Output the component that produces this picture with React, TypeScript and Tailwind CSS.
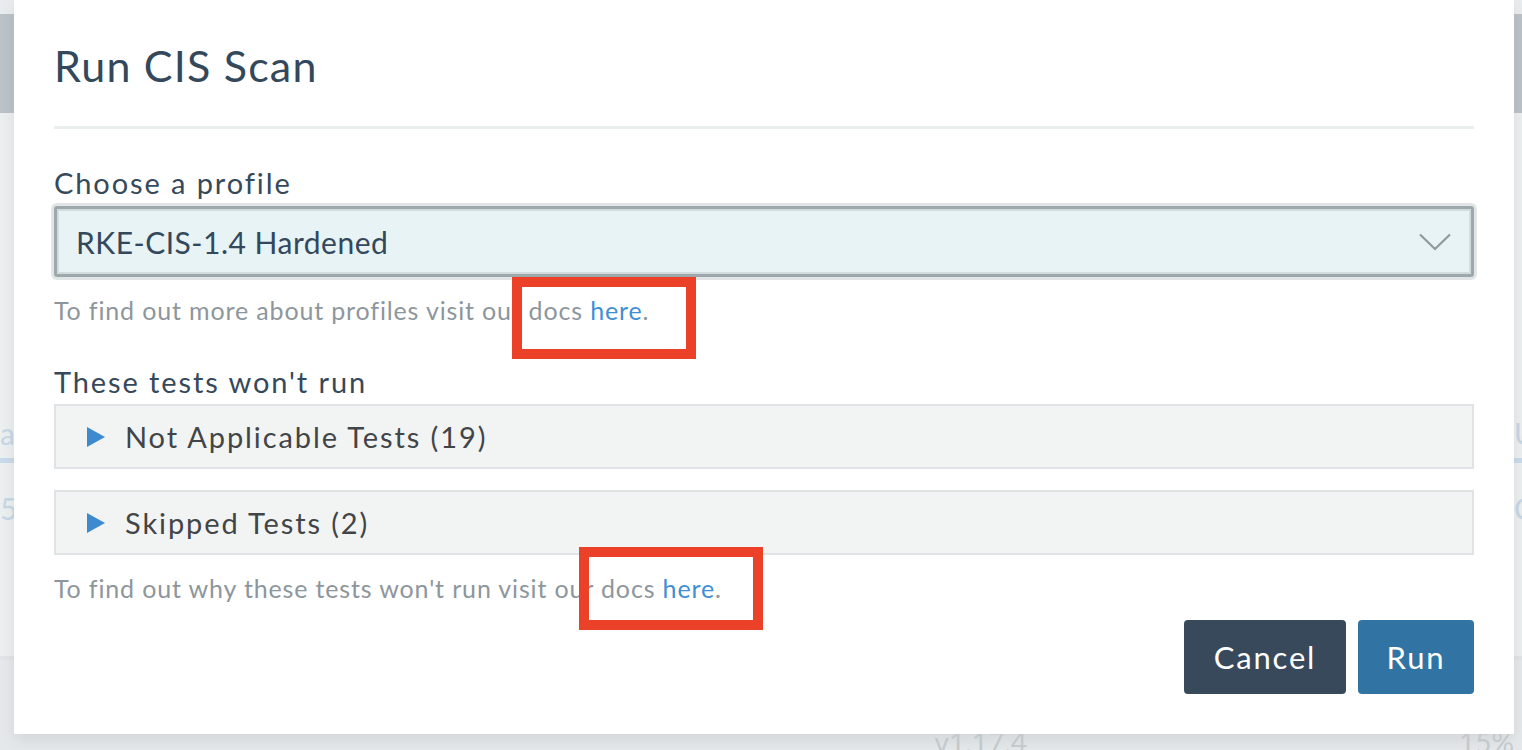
import * as React from "react";

const font = { fontFamily: "Lato, 'Open Sans', sans-serif" };

function Chevron() {
  return (
    <svg width="32" height="18" viewBox="0 0 32 18" fill="none" className="text-[#8e9a9e]">
      <path d="M1 1.5 L16 16 L31 1.5" stroke="currentColor" strokeWidth="2.2" />
    </svg>
  );
}

function Caret() {
  return (
    <svg width="18" height="20" viewBox="0 0 18 20">
      <path d="M0 0 L18 10 L0 20 Z" fill="#3d8ad0" />
    </svg>
  );
}

function Accordion({ label }: { label: string }) {
  return (
    <div className="flex h-[65px] items-center gap-[20px] border-2 border-[#dfe3e5] bg-[#f2f4f4] pl-[31px]">
      <Caret />
      <span className="text-[29px] leading-none tracking-[1.9px] text-[#424547]">{label}</span>
    </div>
  );
}

function Help({ text }: { text: string }) {
  return (
    <p className="h-[36px] text-[25px] leading-[36px] tracking-[0.85px] text-[#8d969c]">
      {text} docs <a className="text-[#3f8fd5]">here</a>.
    </p>
  );
}

function Edge({ letters }: { letters: [string, string] }) {
  return (
    <div className="flex flex-col overflow-hidden">
      <div className="h-[14px] bg-[#e9ecee]" />
      <div className="h-[99px] bg-[#bbc3c9]" />
      <div className="flex h-[350px] flex-col justify-end bg-[#eceff0]">
        <div className="pb-[10px] text-[30px] leading-none text-[#c6d7e6]">{letters[0]}</div>
        <div className="h-[5px] bg-[#c9dbea]" />
      </div>
      <div className="h-[197px] border-b-4 border-[#e0e4e6] bg-[#eceff0] pt-[30px] text-[30px] leading-none text-[#c6d7e6]">
        {letters[1]}
      </div>
      <div className="flex-1 bg-[#e9eced]" />
    </div>
  );
}

export default function App() {
  return (
    <div className="flex h-[750px] w-[1522px] overflow-hidden bg-[#e4e8ea]" style={font}>
      {/* backdrop page edge, left */}
      <div className="w-[14px] shrink-0">
        <Edge letters={["a", "5"]} />
      </div>

      <div className="relative flex w-[1500px] shrink-0 flex-col">
        {/* modal */}
        <div className="flex h-[734px] flex-col bg-white px-[40px] shadow-[0_6px_14px_rgba(0,0,0,0.08)]">
          <div className="h-[126px] pt-[38px]">
            <h2 className="text-[43px] leading-[56px] tracking-[1.2px] text-[#34485c]">Run CIS Scan</h2>
          </div>
          <div className="h-[3px] bg-[#e9eeee]" />

          <label className="mt-[36px] h-[36px] text-[29px] leading-[36px] tracking-[1.9px] text-[#36495b]">
            Choose a profile
          </label>
          <div className="mt-[5px] flex h-[71px] items-center justify-between rounded-[3px] border-[3px] border-[#9ca8ac] bg-[#e7f3f5] pl-[19px] pr-[20px] shadow-[0_0_0_3px_#e2e5e6,inset_0_0_0_2px_#d2dcde]">
            <span className="text-[30px] leading-none tracking-[0.5px] text-[#34485c]">RKE-CIS-1.4 Hardened</span>
            <Chevron />
          </div>
          <div className="mt-[15px]">
            <Help text="To find out more about profiles visit our" />
          </div>

          <div className="mt-[36px] h-[36px] text-[29px] leading-[36px] tracking-[1.9px] text-[#36495b]">
            These tests won't run
          </div>
          <div className="mt-[4px]">
            <Accordion label="Not Applicable Tests (19)" />
          </div>
          <div className="mt-[21px]">
            <Accordion label="Skipped Tests (2)" />
          </div>
          <div className="mt-[15px]">
            <Help text="To find out why these tests won't run visit our" />
          </div>

          <div className="mt-[14px] flex justify-end gap-[12px]">
            <button className="h-[74px] w-[162px] rounded-[4px] bg-[#37495b] text-[31px] tracking-[1.8px] text-white">
              Cancel
            </button>
            <button className="h-[74px] w-[116px] rounded-[4px] bg-[#3174a3] text-[31px] tracking-[1.8px] text-white">
              Run
            </button>
          </div>
        </div>

        {/* backdrop content peeking below the modal */}
        <div className="flex h-[16px] items-start justify-end gap-[432px] overflow-hidden text-[28px] leading-[20px] text-[#c4c9cc]">
          <span className="-mt-[2px]">v1.17.4</span>
          <span className="-mt-[2px]">15%</span>
        </div>

        {/* annotation boxes */}
        <div className="absolute left-[498px] top-[277px] h-[82px] w-[184px] border-[10px] border-[#ea4128]" />
        <div className="absolute left-[565px] top-[547px] h-[83px] w-[184px] border-[10px] border-[#ea4128]" />
      </div>

      {/* backdrop page edge, right */}
      <div className="w-[8px] shrink-0">
        <Edge letters={["U", "C"]} />
      </div>
    </div>
  );
}
